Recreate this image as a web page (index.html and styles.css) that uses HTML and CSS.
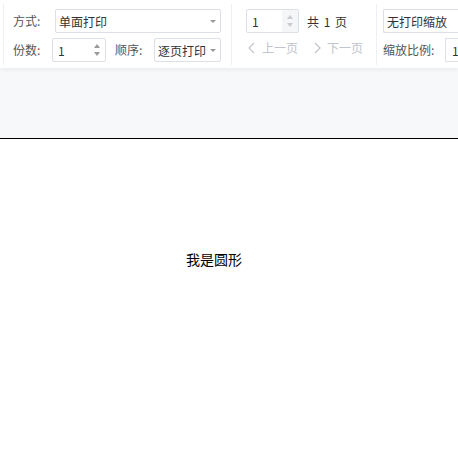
FILE: index.html
```html
<!DOCTYPE html>
<html>
<head>
<meta charset="utf-8">
<link rel="stylesheet" href="styles.css">
</head>
<body>
<div class="toolbar">
  <div class="group g1">
    <div class="row">
      <span class="label l-mode">方式:</span>
      <div class="select s-mode"><span>单面打印</span><i class="caret"></i></div>
    </div>
    <div class="row">
      <span class="label l-copies">份数:</span>
      <div class="num n-copies"><span>1</span><div class="spin"><i class="up"></i><i class="down"></i></div></div>
      <span class="label l-order">顺序:</span>
      <div class="select s-order"><span>逐页打印</span><i class="caret"></i></div>
    </div>
  </div>
  <div class="group g2">
    <div class="row">
      <div class="num n-page"><span>1</span><div class="spin light"><i class="up"></i><i class="down"></i></div></div>
      <span class="total">共&nbsp;1&nbsp;页</span>
    </div>
    <div class="row pager">
      <span class="pbtn"><svg width="10" height="12" viewBox="0 0 10 12"><path d="M7 1 L2 6 L7 11" fill="none" stroke="#c0c4cc" stroke-width="1.2"/></svg>上一页</span>
      <span class="pbtn"><svg width="10" height="12" viewBox="0 0 10 12"><path d="M3 1 L8 6 L3 11" fill="none" stroke="#c0c4cc" stroke-width="1.2"/></svg>下一页</span>
    </div>
  </div>
  <div class="group g3">
    <div class="row">
      <div class="select s-scale"><span>无打印缩放</span></div>
    </div>
    <div class="row">
      <span class="label l-ratio">缩放比例:</span>
      <div class="num n-ratio"><span>1</span></div>
    </div>
  </div>
</div>
<div class="gray"></div>
<div class="page">
  <div class="shape-text">我是圆形</div>
</div>
</body>
</html>
```
FILE: styles.css
```css
* { box-sizing: border-box; }
html, body { margin: 0; padding: 0; overflow: hidden; }
body {
  font-family: "Noto Sans CJK SC", "Noto Sans", sans-serif;
  font-size: 12px;
  color: #333;
  background: #fff;
  width: 458px;
  height: 461px;
}
.toolbar {
  display: flex;
  height: 68px;
  background: #fff;
  padding-left: 3px;
  box-shadow: 0 1px 5px rgba(0, 0, 0, 0.07);
  position: relative;
  z-index: 1;
  white-space: nowrap;
}
.group {
  display: flex;
  flex-direction: column;
  gap: 5px;
  padding-top: 9px;
  border-right: 1px solid #eeeff1;
  margin: 4px 0 3px;
  flex-shrink: 0;
}
.group .row { display: flex; align-items: center; height: 24px; }
.g1 { border-left: 1px solid #eeeff1; padding: 5px 10px 0 9px; width: 229px; }
.g2 { padding: 5px 10px 0 14px; width: 145px; }
.g3 { padding: 5px 0 0 6px; border-right: none; flex: 1; }
.label { color: #555; line-height: 24px; }
.l-mode { width: 42px; }
.l-copies { width: 39px; }
.l-order { width: 39px; margin-left: 9px; }
.l-ratio { width: 62px; }
.select, .num {
  height: 24px;
  border: 1px solid #dcdfe6;
  border-radius: 2px;
  display: flex;
  align-items: center;
  padding-left: 3px;
  position: relative;
  color: #333;
  background: #fff;
}
.num { padding-left: 5px; }
.s-mode { width: 166px; }
.s-order { width: 67px; }
.s-scale { width: 90px; border-right: none; }
.n-copies { width: 54px; }
.n-page { width: 53px; }
.n-ratio { width: 20px; border-right: none; padding-left: 6px; }
.caret {
  position: absolute;
  right: 4px;
  top: 10px;
  width: 0; height: 0;
  border-left: 3px solid transparent;
  border-right: 3px solid transparent;
  border-top: 3px solid #999;
}
.spin {
  position: absolute;
  right: 0; top: 0; bottom: 0;
  width: 16px;
  display: flex;
  flex-direction: column;
  align-items: center;
  justify-content: space-between;
  padding: 5px 0 5px;
}
.spin.light { background: #f5f6f8; }
.spin .up, .spin .down {
  width: 0; height: 0;
  border-left: 3px solid transparent;
  border-right: 3px solid transparent;
}
.spin .up { border-bottom: 4px solid #999; }
.spin .down { border-top: 4px solid #999; }
.spin.light .up { border-bottom-color: #c8cbd0; }
.spin.light .down { border-top-color: #c8cbd0; }
.total { margin-left: 8px; color: #333; word-spacing: 2px; }
.pager { color: #c0c4cc; gap: 14px; padding-left: 1px; padding-bottom: 5px; }
.pbtn { display: flex; align-items: center; gap: 5px; }
.gray { height: 71px; background: #f7f8fa; border-bottom: 1px solid #000; }
.page { padding: 110px 0 0 186px; }
.shape-text { font-size: 14px; color: #000; line-height: 20px; }
```
